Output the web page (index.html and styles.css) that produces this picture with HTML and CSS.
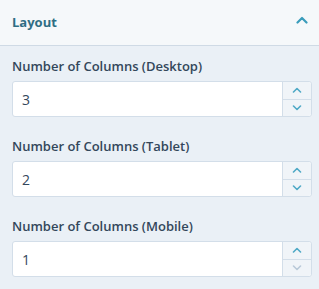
FILE: index.html
```html
<!DOCTYPE html>
<html>
<head>
<meta charset="utf-8">
<link rel="stylesheet" href="styles.css">
</head>
<body>
<div class="panel">
  <div class="header">
    <span class="title">Layout</span>
    <svg class="toggle" width="12" height="8" viewBox="0 0 12 8"><path d="M1.5 6.5 L6 2 L10.5 6.5" fill="none" stroke="#3a9cbb" stroke-width="2.2" stroke-linecap="round" stroke-linejoin="round"/></svg>
  </div>
  <div class="body">
    <div class="field">
      <label class="label">Number of Columns (Desktop)</label>
      <div class="input">
        <span class="value">3</span>
        <div class="spin">
          <div class="btn"><svg width="10" height="6" viewBox="0 0 10 6"><path d="M1.5 5 L5 1.5 L8.5 5" fill="none" stroke="#4fa9c6" stroke-width="1.6" stroke-linecap="round" stroke-linejoin="round"/></svg></div>
          <div class="btn"><svg width="10" height="6" viewBox="0 0 10 6"><path d="M1.5 1 L5 4.5 L8.5 1" fill="none" stroke="#4fa9c6" stroke-width="1.6" stroke-linecap="round" stroke-linejoin="round"/></svg></div>
        </div>
      </div>
    </div>
    <div class="field">
      <label class="label">Number of Columns (Tablet)</label>
      <div class="input">
        <span class="value">2</span>
        <div class="spin">
          <div class="btn"><svg width="10" height="6" viewBox="0 0 10 6"><path d="M1.5 5 L5 1.5 L8.5 5" fill="none" stroke="#4fa9c6" stroke-width="1.6" stroke-linecap="round" stroke-linejoin="round"/></svg></div>
          <div class="btn"><svg width="10" height="6" viewBox="0 0 10 6"><path d="M1.5 1 L5 4.5 L8.5 1" fill="none" stroke="#4fa9c6" stroke-width="1.6" stroke-linecap="round" stroke-linejoin="round"/></svg></div>
        </div>
      </div>
    </div>
    <div class="field">
      <label class="label">Number of Columns (Mobile)</label>
      <div class="input">
        <span class="value">1</span>
        <div class="spin">
          <div class="btn"><svg width="10" height="6" viewBox="0 0 10 6"><path d="M1.5 5 L5 1.5 L8.5 5" fill="none" stroke="#4fa9c6" stroke-width="1.6" stroke-linecap="round" stroke-linejoin="round"/></svg></div>
          <div class="btn"><svg width="10" height="6" viewBox="0 0 10 6"><path d="M1.5 1 L5 4.5 L8.5 1" fill="none" stroke="#b9c9d8" stroke-width="1.6" stroke-linecap="round" stroke-linejoin="round"/></svg></div>
        </div>
      </div>
    </div>
  </div>
</div>
</body>
</html>
```
FILE: styles.css
```css
* { box-sizing: border-box; }
html, body { margin: 0; padding: 0; }
body {
  background: #eaf0f6;
  font-family: "Open Sans", Lato, sans-serif;
  color: #33475b;
  width: 319px;
  height: 289px;
  overflow: hidden;
}
.panel { width: 319px; }
.header {
  height: 46px;
  background: #f5f8fa;
  border-bottom: 1px solid #cfdae5;
  display: flex;
  align-items: center;
  justify-content: space-between;
  padding: 0 11px 0 12px;
}
.title {
  font-size: 13px;
  font-weight: 700;
  color: #2f6e84;
  padding-bottom: 1px;
}
.toggle { display: block; margin-bottom: 5px; }
.body {
  padding: 10px 7px 0 12px;
  display: flex;
  flex-direction: column;
  gap: 19px;
}
.field { display: flex; flex-direction: column; gap: 5px; }
.label {
  font-size: 13px;
  font-weight: 600;
  line-height: 20px;
  color: #33475b;
}
.input {
  height: 36px;
  width: 300px;
  background: #fff;
  border: 1px solid #d3dee9;
  border-radius: 3px;
  display: flex;
  align-items: stretch;
}
.value {
  flex: 1;
  display: flex;
  align-items: center;
  padding-left: 9px;
  font-size: 14px;
  color: #33475b;
}
.spin {
  width: 29px;
  background: #f0f4f8;
  border-left: 1px solid #d3dee9;
  display: flex;
  flex-direction: column;
  border-radius: 0 3px 3px 0;
}
.btn {
  flex: 1;
  display: flex;
  align-items: center;
  justify-content: center;
}
.btn + .btn { border-top: 1px solid #d3dee9; }
.btn svg { display: block; }
```
